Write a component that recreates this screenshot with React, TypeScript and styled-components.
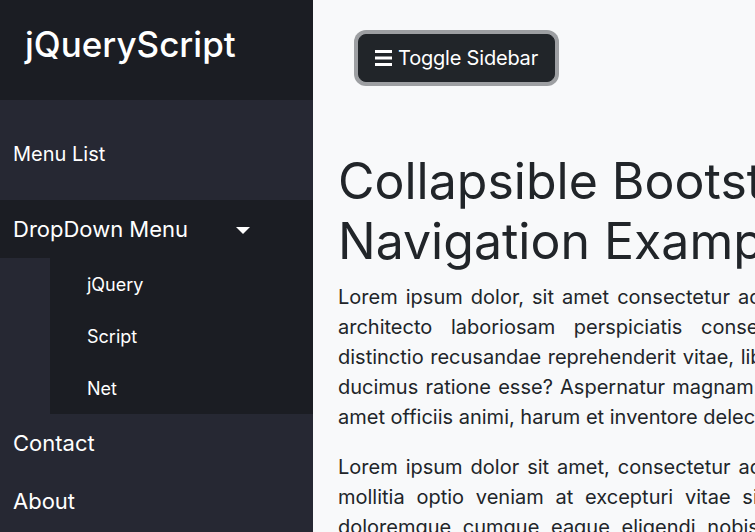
import styled, { createGlobalStyle } from 'styled-components';

const GlobalStyle = createGlobalStyle`
	html, body {
		margin: 0;
		padding: 0;
		overflow: hidden;
	}
	body {
		font-family: 'Inter', 'Noto Sans', sans-serif;
		background: #f8f9fa;
	}
	* {
		box-sizing: border-box;
	}
`;

// ── Layout ────────────────────────────────────────────────────────────────────

const Wrapper = styled.div`
	display: flex;
	align-items: stretch;
	min-height: 100vh;
	width: max-content;
`;

// ── Sidebar ───────────────────────────────────────────────────────────────────

const Sidebar = styled.nav`
	width: 313px;
	flex-shrink: 0;
	background: #262833;
	color: #fff;
`;

const SidebarHeader = styled.div`
	height: 100px;
	padding: 23px 25px 0;
	background: #1b1d23;
`;

const Brand = styled.h3`
	margin: 0;
	font-size: 35px;
	font-weight: 500;
	line-height: 1.2;
`;

const MenuTitle = styled.p`
	margin: 0;
	height: 100px;
	padding: 39px 13px 0;
	font-size: 20px;
	line-height: 30px;
`;

const MenuList = styled.ul`
	list-style: none;
	margin: 0;
	padding: 0;
`;

const MenuLink = styled.a<{ $dark?: boolean }>`
	display: flex;
	align-items: center;
	height: 58px;
	padding: 0 13px;
	font-size: 22px;
	color: #fff;
	text-decoration: none;
	background: ${({ $dark }) => ($dark ? '#1b1d23' : 'transparent')};
`;

const Caret = styled.span`
	display: inline-block;
	margin-left: 48px;
	margin-top: 2px;
	border-top: 7px solid #fff;
	border-left: 7px solid transparent;
	border-right: 7px solid transparent;
`;

const SubMenu = styled.ul`
	list-style: none;
	margin: 0 0 0 50px;
	padding: 0;
	background: #1b1d23;
`;

const SubLink = styled.a`
	display: flex;
	align-items: center;
	height: 52px;
	padding-left: 37px;
	font-size: 18px;
	color: #fff;
	text-decoration: none;
`;

// ── Content ───────────────────────────────────────────────────────────────────

const Content = styled.main`
	padding: 34px 25px 0;
	width: 810px;
	color: #212529;
`;

const Toolbar = styled.div`
	padding-left: 20px;
	margin-bottom: 69px;
`;

const ToggleButton = styled.button`
	display: inline-flex;
	align-items: center;
	gap: 6px;
	padding: 8px 16px;
	font-family: inherit;
	font-size: 20px;
	line-height: 30px;
	letter-spacing: -0.2px;
	color: #fff;
	background: #212529;
	border: 1px solid #212529;
	border-radius: 8px;
	box-shadow: 0 0 0 4px rgba(66, 70, 73, 0.5);
	cursor: pointer;
`;

const Title = styled.h1`
	margin: 0 0 11px;
	font-size: 50px;
	font-weight: 400;
	line-height: 1.2;
`;

const Lead = styled.p`
	margin: 0 0 20px;
	font-size: 20px;
	line-height: 30px;
	text-align: justify;
`;

function BarsIcon() {
	return (
		<svg width="17" height="16" viewBox="0 0 17 16" fill="#fff">
			<rect x="0" y="0" width="17" height="3" />
			<rect x="0" y="6.5" width="17" height="3" />
			<rect x="0" y="13" width="17" height="3" />
		</svg>
	);
}

export default function App() {
	return (
		<>
			<GlobalStyle />
			<Wrapper>
				<Sidebar>
					<SidebarHeader>
						<Brand>jQueryScript</Brand>
					</SidebarHeader>
					<MenuTitle>Menu List</MenuTitle>
					<MenuList>
						<li>
							<MenuLink href="#" $dark>
								DropDown Menu
								<Caret />
							</MenuLink>
							<SubMenu>
								<li><SubLink href="#">jQuery</SubLink></li>
								<li><SubLink href="#">Script</SubLink></li>
								<li><SubLink href="#">Net</SubLink></li>
							</SubMenu>
						</li>
						<li><MenuLink href="#">Contact</MenuLink></li>
						<li><MenuLink href="#">About</MenuLink></li>
					</MenuList>
				</Sidebar>

				<Content>
					<Toolbar>
						<ToggleButton type="button">
							<BarsIcon />
							Toggle Sidebar
						</ToggleButton>
					</Toolbar>
					<Title>Collapsible Bootstrap Sidebar Navigation Example</Title>
					<Lead>
						Lorem ipsum dolor, sit amet consectetur adipisicing elit. Quibusdam, quasi est
						architecto laboriosam perspiciatis consequuntur necessitatibus quisquam
						distinctio recusandae reprehenderit vitae, libero eius nulla fugiat quibus dolores
						ducimus ratione esse? Aspernatur magnam tempora sit quas, voluptatibus nam
						amet officiis animi, harum et inventore delectus!
					</Lead>
					<Lead>
						Lorem ipsum dolor sit amet, consectetur adipisicing elit. Quibusdam, quasi est
						mollitia optio veniam at excepturi vitae sint nemo voluptatem reprehenderit
						doloremque cumque eaque eligendi nobis reiciendis perferendis quibusdam
						consequatur.
					</Lead>
				</Content>
			</Wrapper>
		</>
	);
}
